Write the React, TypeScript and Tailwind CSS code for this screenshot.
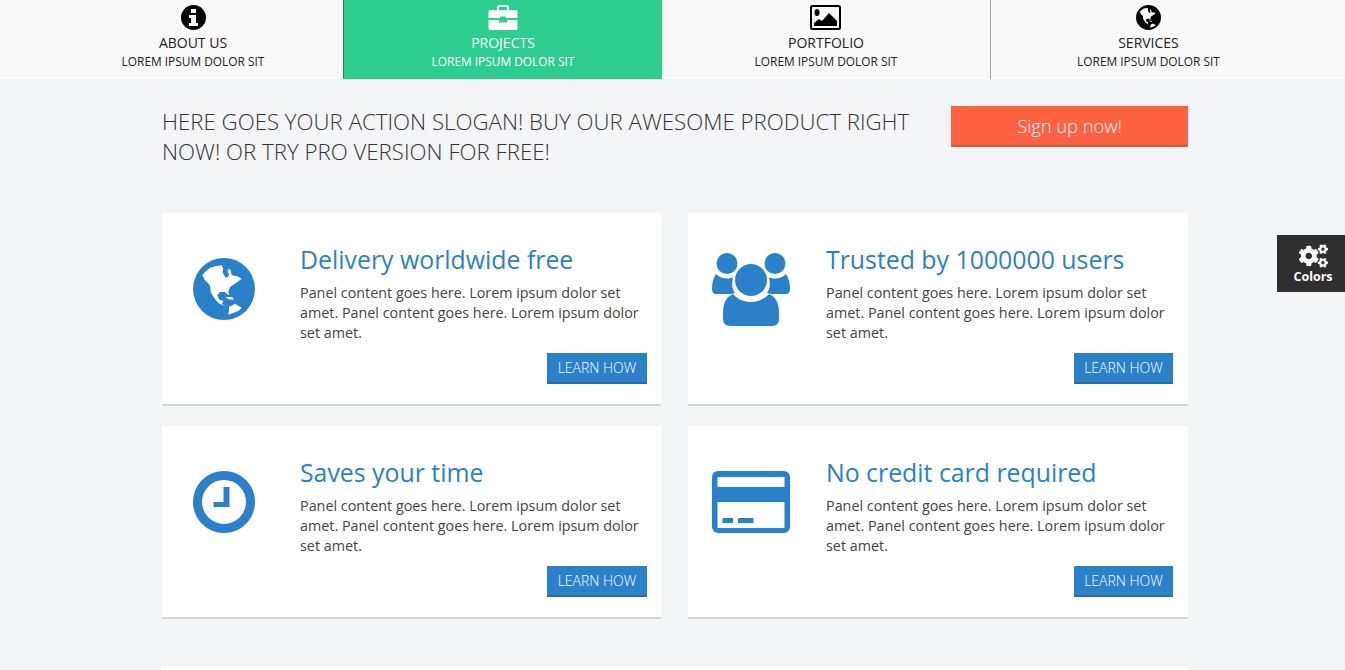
import { FaCogs } from "react-icons/fa";

const NAV = [
  { title: "ABOUT US", icon: <InfoIcon />, cell: "pl-[43px] bg-[#f9f9f9] text-[#222]" },
  { title: "PROJECTS", icon: <CaseIcon />, cell: "bg-[#2dcc8f] text-white border-l border-[#4f6f63]" },
  { title: "PORTFOLIO", icon: <PictureIcon />, cell: "bg-[#f9f9f9] text-[#222]" },
  { title: "SERVICES", icon: <GlobeIcon className="h-[25px] w-[25px] text-black" />, cell: "pr-[39px] bg-[#f9f9f9] text-[#222] border-l border-[#aaaaaa]" },
];

const CARDS = [
  { title: "Delivery worldwide free", icon: <GlobeIcon className="h-[62px] w-[62px] text-[#2b81c9]" /> },
  { title: "Trusted by 1000000 users", icon: <UsersIcon /> },
  { title: "Saves your time", icon: <ClockIcon /> },
  { title: "No credit card required", icon: <CardIcon /> },
];

// circle with the americas cut out of it
function GlobeIcon({ className }: { className: string }) {
  return (
    <svg className={className} viewBox="0 0 62 62">
      <path
        fill="currentColor"
        fillRule="evenodd"
        d="M31 0a31 31 0 1 1 0 62a31 31 0 1 1 0-62z
           M9.300 17.300L12 14L17 9.700L22 8.300L28.700 7.300L30.300 10.700L29.500 14L31 17L32.500 19.500L35.300 19L36 16L34.500 14L35.500 10.500L37.700 12.300L38.700 17.300L44.300 18.300L48.700 20.700L44.300 24L41 26.300L37 29L35.300 34L36.300 37.300L33.700 35.700L32 34L27 34L24.300 37.300L26.300 41.700L30.300 43L29 45.700L32 48.300L25.300 45L21 39.700L17.700 34L17 27.300L12 22.300z
           M32 39L39 39L41 41.500L36 41.500z
           M36 49L42 45.700L48.700 49.700L45.300 53L35.300 56.700L36 52.300z"
      />
    </svg>
  );
}

function InfoIcon() {
  return (
    <svg width="25" height="25" viewBox="0 0 25 25">
      <circle cx="12.500" cy="12.500" r="12.500" fill="#000" />
      <rect x="10" y="4" width="5" height="4" fill="#f9f9f9" />
      <path d="M8 10h7v8h2v3H8v-3h2v-5H8z" fill="#f9f9f9" />
    </svg>
  );
}

function CaseIcon() {
  return (
    <svg width="30" height="25" viewBox="0 0 30 25">
      <path d="M9 5V1.500A1.500 1.500 0 0 1 10.500 0h9A1.500 1.500 0 0 1 21 1.500V5h-2V2h-8v3z" fill="#fff" />
      <path d="M2 5h26a1.500 1.500 0 0 1 1.500 1.500V13H18v-1.500h-6V13H.5V6.500A1.500 1.500 0 0 1 2 5z" fill="#fff" />
      <path d="M.5 15H11v2.500h8V15h10.500v8.500A1.500 1.500 0 0 1 28 25H2a1.500 1.500 0 0 1-1.500-1.500z" fill="#fff" />
    </svg>
  );
}

function PictureIcon() {
  return (
    <svg className="-ml-[2px]" width="31" height="25" viewBox="0 0 31 25">
      <rect x="1" y="1" width="29" height="23" rx="1.500" fill="none" stroke="#000" strokeWidth="2" />
      <ellipse cx="7" cy="7.500" rx="2.500" ry="3.500" fill="#000" />
      <path d="M4 21v-3l5-4 3 2 7-8 8 8v5z" fill="#000" />
    </svg>
  );
}

function UsersIcon() {
  return (
    <svg className="ml-[1px]" width="78" height="73" viewBox="0 0 78 73" fill="#2b81c9">
      <circle cx="15" cy="10.500" r="10.500" />
      <circle cx="63" cy="10.500" r="10.500" />
      <path d="M4 21C7 24 11 25.500 15 25.500C17 25.500 19.500 25 21 24.500C19.500 31 20 36 23 40L19 41H4Q0 41 0 36Q0 27 4 21z" />
      <path d="M74 21C71 24 67 25.500 63 25.500C61 25.500 58.500 25 57 24.500C58.500 31 58 36 55 40L59 41H74Q78 41 78 36Q78 27 74 21z" />
      <circle cx="39" cy="27" r="16" />
      <path d="M21 41Q11 45 11 60V66Q11 73 18 73H60Q67 73 67 66V60Q67 45 57 41C53 46 46 49 39 49C32 49 25 46 21 41z" />
    </svg>
  );
}

function ClockIcon() {
  return (
    <svg width="62" height="62" viewBox="0 0 62 62">
      <circle cx="31" cy="31" r="26.500" fill="none" stroke="#2b81c9" strokeWidth="9" />
      <path d="M30.500 16h6v20H20.500v-5h10z" fill="#2b81c9" />
    </svg>
  );
}

function CardIcon() {
  return (
    <svg className="ml-[1px]" width="78" height="62" viewBox="0 0 78 62">
      <path fillRule="evenodd" d="M6 0h66a6 6 0 0 1 6 6v50a6 6 0 0 1-6 6H6a6 6 0 0 1-6-6V6a6 6 0 0 1 6-6zM5.500 6v10h67V6zM5.500 31v26h67V31z" fill="#2b81c9" />
      <rect x="10.500" y="47" width="10.500" height="5" fill="#2b81c9" />
      <rect x="26" y="47" width="15.500" height="5" fill="#2b81c9" />
    </svg>
  );
}

export default function App() {
  return (
    <div className="relative h-[670px] overflow-hidden bg-[#f4f5f7] font-['Open_Sans',sans-serif]">
      <nav className="grid h-[79px] grid-cols-[343px_319px_328px_1fr]">
        {NAV.map((item) => (
          <div key={item.title} className={`flex flex-col items-center ${item.cell}`}>
            <div className="flex h-[34px] items-center">{item.icon}</div>
            <div className="text-[14px] leading-[18px]">{item.title}</div>
            <div className="text-[11.9px] leading-[18px]">LOREM IPSUM DOLOR SIT</div>
          </div>
        ))}
      </nav>

      <main className="ml-[162px] w-[1026px]">
        <div className="flex justify-between pt-[27px]">
          <h1 className="w-[770px] pt-[1px] text-[22.25px] leading-[30px] font-light text-[#333]">
            HERE GOES YOUR ACTION SLOGAN! BUY OUR AWESOME PRODUCT RIGHT NOW! OR TRY PRO VERSION FOR FREE!
          </h1>
          <button className="h-[41px] w-[237px] border-b-2 border-[#cc5c43] bg-[#ff6243] pt-[1px] text-[18.3px] font-light text-white">
            Sign up now!
          </button>
        </div>

        <div className="mt-[46px] grid grid-cols-[499px_500px] gap-x-[27px] gap-y-[20px]">
          {CARDS.map((card) => (
            <section key={card.title} className="flex h-[193px] border-b-2 border-[#d4d5d7] bg-white even:pr-[1px] even:[&_button]:w-[99px]">
              <div className="flex w-[124px] shrink-0 items-center justify-center pb-[39px]">{card.icon}</div>
              <div className="flex-1 pt-[28px] pr-[14px] pl-[14px]">
                <h2 className="text-[24.85px] leading-[36px] text-[#2b81c9]">{card.title}</h2>
                <p className="mt-[6px] text-[14.35px] leading-[20px] text-[#444]">
                  Panel content goes here. Lorem ipsum dolor set amet. Panel content goes here. Lorem ipsum dolor set amet.
                </p>
                <div className="mt-[10px] flex justify-end">
                  <button className="h-[31px] w-[100px] border-b-2 border-[#2a6ea5] bg-[#2b81c9] text-[14px] font-light text-white">
                    LEARN HOW
                  </button>
                </div>
              </div>
            </section>
          ))}
        </div>

        <div className="mt-[47px] h-[40px] bg-white" />
      </main>

      <div className="absolute top-[235px] right-0 flex h-[57px] w-[68px] flex-col items-center justify-center bg-[#2f2f2f] pb-[2px] pl-[4px] text-white">
        <FaCogs className="h-[28px] w-[29px]" />
        <span className="text-[12.5px] leading-[14px] font-bold">Colors</span>
      </div>
    </div>
  );
}
